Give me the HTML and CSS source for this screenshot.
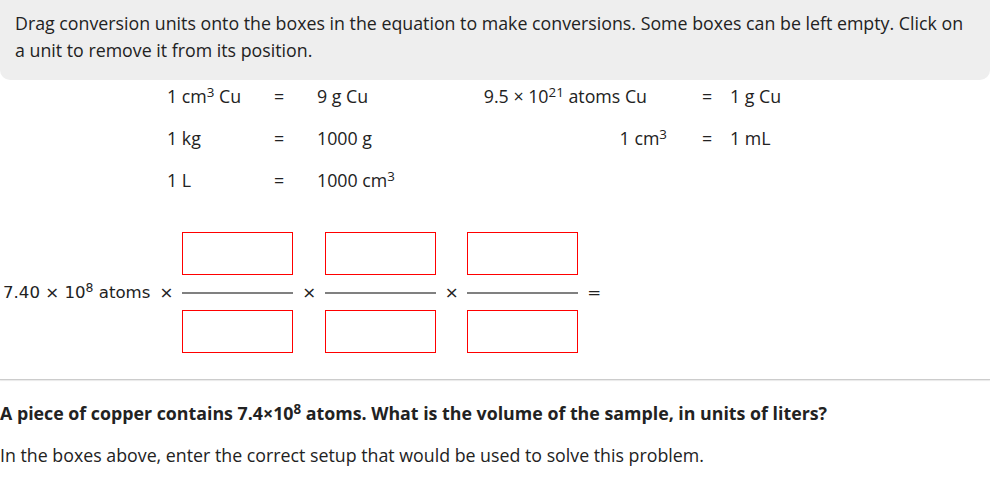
FILE: index.html
```html
<!DOCTYPE html>
<html>
<head>
<meta charset="utf-8">
<link rel="stylesheet" href="styles.css">
</head>
<body>
<div class="instructions">Drag conversion units onto the boxes in the equation to make conversions. Some boxes can be left empty. Click on a unit to remove it from its position.</div>

<div class="units">
  <div class="c1">1 cm<sup>3</sup> Cu</div><div class="c2">=</div><div class="c3">9 g Cu</div>
  <div class="c4 shift">9.5 × 10<sup>21</sup> atoms Cu</div><div class="c5">=</div><div class="c6">1 g Cu</div>

  <div class="c1">1 kg</div><div class="c2">=</div><div class="c3">1000 g</div>
  <div class="c4">1 cm<sup>3</sup></div><div class="c5">=</div><div class="c6">1 mL</div>

  <div class="c1">1 L</div><div class="c2">=</div><div class="c3">1000 cm<sup>3</sup></div>
  <div class="c4"></div><div class="c5"></div><div class="c6"></div>
</div>

<div class="equation">
  <div class="given">7.40 × 10<sup>8</sup> atoms</div>
  <div class="op">×</div>
  <div class="frac"><div class="box"></div><div class="bar"></div><div class="box"></div></div>
  <div class="op">×</div>
  <div class="frac"><div class="box"></div><div class="bar"></div><div class="box"></div></div>
  <div class="op">×</div>
  <div class="frac"><div class="box"></div><div class="bar"></div><div class="box"></div></div>
  <div class="op">=</div>
</div>

<div class="rule"></div>

<p class="question">A piece of copper contains 7.4×10<sup>8</sup> atoms. What is the volume of the sample, in units of liters?</p>
<p class="hint">In the boxes above, enter the correct setup that would be used to solve this problem.</p>
</body>
</html>
```

FILE: styles.css
```css
html, body {
  margin: 0;
  padding: 0;
  background: #ffffff;
}
body {
  font-family: "Open Sans", "Liberation Sans", sans-serif;
  font-size: 17.8px;
  color: #222222;
  width: 990px;
}
sup {
  font-size: 0.75em;
  line-height: 0;
  vertical-align: 0.45em;
}
.instructions {
  background: #eeeeee;
  border-radius: 0 0 10px 10px;
  padding: 10px 15px 16px 15px;
  line-height: 27px;
  height: 54px;
}
.units {
  display: grid;
  grid-template-columns: 108px 42px 150px 200px 63px 120px;
  grid-auto-rows: 32px;
  row-gap: 10px;
  padding-left: 167px;
  align-items: center;
  line-height: 32px;
}
.c2 {
  margin-left: -1px;
}
.c4 {
  text-align: right;
}
.c4.shift {
  padding-right: 20px;
  white-space: nowrap;
}
.c5 {
  padding-left: 35px;
}
.equation {
  display: flex;
  align-items: center;
  margin-top: 36px;
  padding-left: 3px;
  font-family: "DejaVu Sans", Verdana, sans-serif;
  font-size: 16.6px;
}
.given {
  white-space: nowrap;
}
.op {
  width: 31.5px;
  text-align: center;
}
.given + .op {
  width: 32px;
}
.frac {
  display: flex;
  flex-direction: column;
  width: 111px;
}
.box {
  height: 41px;
  border: 1px solid #ff0000;
}
.bar {
  height: 2px;
  background: #808080;
  margin: 17px 0 16px 0;
}
.rule {
  margin-top: 26px;
  height: 1px;
  background: #cccccc;
  box-shadow: 0 1px 1px #e6e6e6;
}
.question {
  margin: 20px 0 0 0;
  font-weight: bold;
  line-height: 27px;
}
.hint {
  margin: 15px 0 0 0;
  line-height: 27px;
}
```
